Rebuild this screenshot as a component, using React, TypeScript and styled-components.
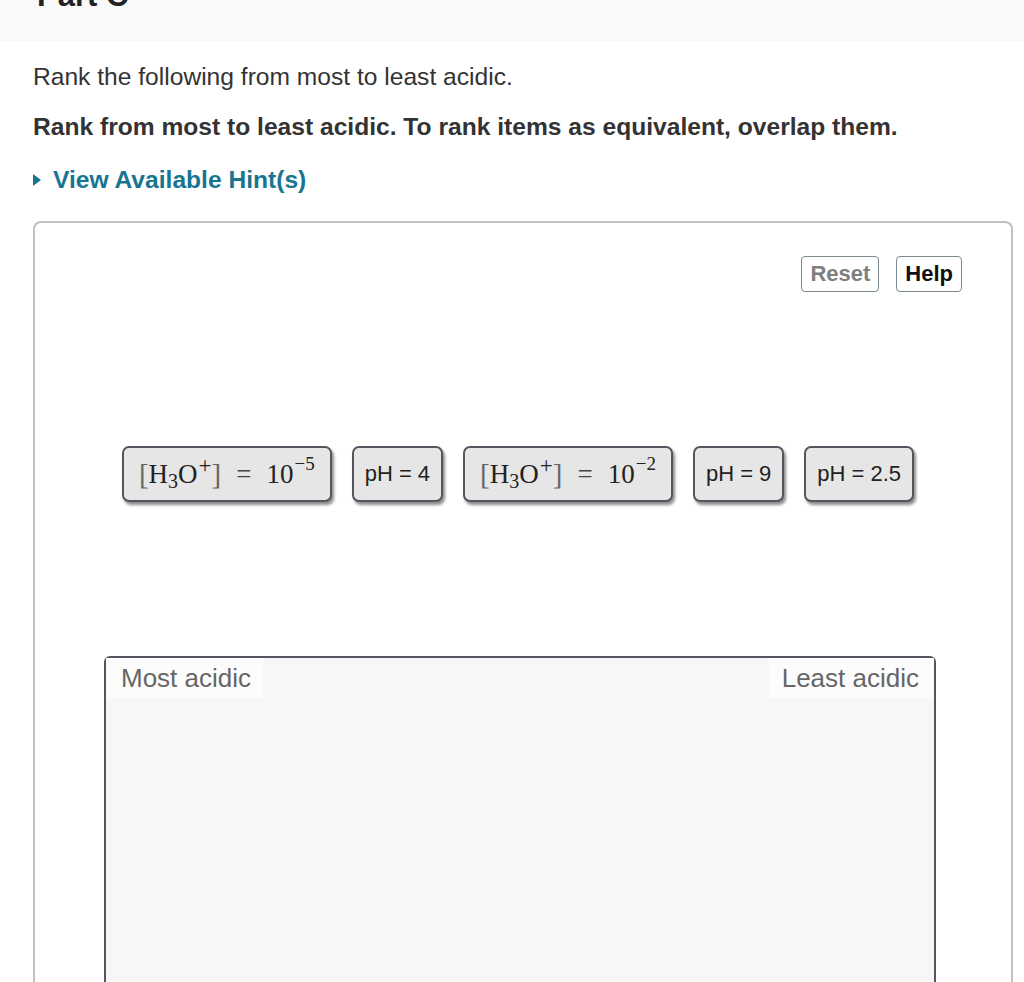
import styled, { createGlobalStyle } from 'styled-components';

const GlobalStyle = createGlobalStyle`
  html, body {
    margin: 0;
    padding: 0;
    background: #ffffff;
    font-family: "Liberation Sans", Arial, sans-serif;
    color: #333333;
  }
`;

const Page = styled.div`
  width: 1024px;
  height: 982px;
  overflow: hidden;
`;

const PartHeader = styled.header`
  height: 41px;
  background: #f9f9f9;
  overflow: hidden;
`;

const PartTitle = styled.h2`
  margin: -21px 0 0 37px;
  font-size: 31px;
  line-height: 34px;
  font-weight: 700;
  color: #222222;
`;

const Body = styled.main`
  padding: 0 0 0 33px;
`;

const Prompt = styled.p<{ $bold?: boolean }>`
  margin: 0;
  font-size: 24.6px;
  line-height: 28px;
  font-weight: ${(p) => (p.$bold ? 700 : 400)};
  color: #333333;
`;

const Instructions = styled.div`
  display: flex;
  flex-direction: column;
  gap: 22px;
  padding-top: 22px;
`;

const HintToggle = styled.button`
  display: flex;
  align-items: center;
  gap: 12px;
  margin: 25px 0 0 0;
  padding: 0;
  border: none;
  background: none;
  font-family: inherit;
  font-size: 24.6px;
  line-height: 28px;
  font-weight: 700;
  color: #177592;
  cursor: pointer;
`;

const Caret = styled.span`
  width: 0;
  height: 0;
  border-top: 6px solid transparent;
  border-bottom: 6px solid transparent;
  border-left: 8px solid #177592;
`;

const RankingPanel = styled.section`
  box-sizing: border-box;
  width: 980px;
  height: 800px;
  margin-top: 27px;
  border: 2px solid #c0c0c0;
  border-bottom: none;
  border-radius: 8px 8px 0 0;
  padding-top: 33px;
`;

const Toolbar = styled.div`
  display: flex;
  justify-content: flex-end;
  gap: 17px;
  padding-right: 49px;
`;

const ToolButton = styled.button<{ $muted?: boolean }>`
  box-sizing: border-box;
  height: 36px;
  padding: 0 8px;
  border: 1.5px solid #7b8a90;
  border-radius: 4px;
  background: #ffffff;
  font-family: "Liberation Sans", Arial, sans-serif;
  font-size: 22px;
  font-weight: 700;
  color: ${(p) => (p.$muted ? '#7f7f7f' : '#111111')};
  cursor: pointer;
`;

const ItemRow = styled.div`
  display: flex;
  justify-content: center;
  gap: 20px;
  margin-top: 154px;
  padding-right: 10px;
`;

const Card = styled.div<{ $math?: boolean }>`
  box-sizing: border-box;
  height: 56px;
  display: flex;
  align-items: center;
  padding: 0 ${(p) => (p.$math ? '15px' : '11px')};
  background: #e6e6e6;
  border: 2px solid #53565e;
  border-radius: 7px;
  box-shadow: 2px 3px 3px rgba(0, 0, 0, 0.45);
  font-family: ${(p) =>
    p.$math ? '"Liberation Serif", "Times New Roman", serif' : '"Liberation Sans", Arial, sans-serif'};
  font-size: ${(p) => (p.$math ? '27px' : '22px')};
  color: #222222;
  white-space: nowrap;
`;

const Bracket = styled.span`
  color: #666666;
  font-size: 29px;
`;

const Sub = styled.span`
  display: inline-block;
  font-size: 20px;
  transform: translateY(7px);
`;

const Sup = styled.span<{ $sign?: boolean }>`
  display: inline-block;
  font-size: ${(p) => (p.$sign ? '23px' : '19px')};
  transform: translateY(${(p) => (p.$sign ? '-8px' : '-10px')});
  margin-left: 1px;
`;

const Eq = styled.span`
  margin: 0 15px;
  color: #444444;
`;

const DropZone = styled.div`
  box-sizing: border-box;
  width: 832px;
  height: 400px;
  margin: 154px 0 0 69px;
  background: #f7f7f7;
  border: 2px solid #53565e;
  border-bottom: none;
  border-radius: 6px 6px 0 0;
  display: flex;
  justify-content: space-between;
  align-items: flex-start;
`;

const ZoneLabel = styled.div<{ $right?: boolean }>`
  height: 40px;
  display: flex;
  align-items: center;
  padding: ${(p) => (p.$right ? '0 15px 0 13px' : '0 12px 0 15px')};
  background: #fcfcfc;
  font-size: 26px;
  color: #666666;
`;

function MathItem({ exp }: { exp: string }) {
  return (
    <Card $math>
      <Bracket>[</Bracket>H<Sub>3</Sub>O<Sup $sign>+</Sup>
      <Bracket>]</Bracket>
      <Eq>=</Eq>10<Sup>−{exp}</Sup>
    </Card>
  );
}

export default function App() {
  return (
    <Page>
      <GlobalStyle />
      <PartHeader>
        <PartTitle>Part C</PartTitle>
      </PartHeader>
      <Body>
        <Instructions>
          <Prompt>Rank the following from most to least acidic.</Prompt>
          <Prompt $bold>Rank from most to least acidic. To rank items as equivalent, overlap them.</Prompt>
        </Instructions>
        <HintToggle>
          <Caret />
          View Available Hint(s)
        </HintToggle>
        <RankingPanel>
          <Toolbar>
            <ToolButton $muted>Reset</ToolButton>
            <ToolButton>Help</ToolButton>
          </Toolbar>
          <ItemRow>
            <MathItem exp="5" />
            <Card>pH = 4</Card>
            <MathItem exp="2" />
            <Card>pH = 9</Card>
            <Card>pH = 2.5</Card>
          </ItemRow>
          <DropZone>
            <ZoneLabel>Most acidic</ZoneLabel>
            <ZoneLabel $right>Least acidic</ZoneLabel>
          </DropZone>
        </RankingPanel>
      </Body>
    </Page>
  );
}
